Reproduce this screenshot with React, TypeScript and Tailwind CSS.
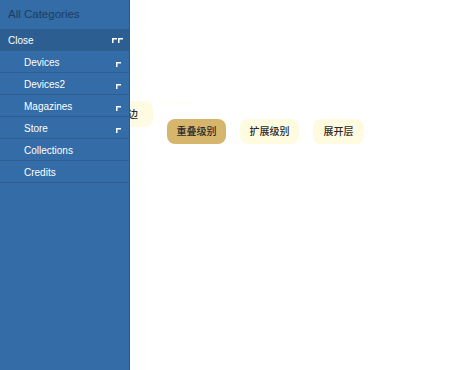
import React from 'react';

const items = [
  { label: 'Devices', sub: true },
  { label: 'Devices2', sub: true },
  { label: 'Magazines', sub: true },
  { label: 'Store', sub: true },
  { label: 'Collections', sub: false },
  { label: 'Credits', sub: false },
];

function Corner() {
  return (
    <svg width="5" height="5" viewBox="0 0 5 5" className="block">
      <path d="M0.75 5 V0.75 H5" fill="none" stroke="#ffffff" strokeWidth="1.5" />
    </svg>
  );
}

export default function App() {
  return (
    <div
      className="relative w-[474px] h-[370px] overflow-hidden bg-white"
      style={{ fontFamily: '"Liberation Sans", Arial, sans-serif' }}
    >
      {/* page content behind the menu */}
      <div
        className="flex flex-col pt-[101px] text-[10px] text-[#2a2a2a] font-medium"
        style={{ fontFamily: '"Liberation Sans", "Noto Sans CJK SC", sans-serif' }}
      >
        <div className="flex items-start gap-[8px] pl-[60px]">
          <div className="w-[93px] h-[26px] rounded-lg bg-[#fffbe3] flex items-center justify-end pr-[15px]">边</div>
          <div className="w-[30px] h-[3px] bg-[#fffef7]" />
        </div>
        <div className="flex items-center gap-[14px] pl-[167px] mt-[-8px]">
          <div className="w-[59px] h-[25px] rounded-lg bg-[#d6b56c] flex items-center justify-center">重叠级别</div>
          <div className="w-[59px] h-[25px] rounded-lg bg-[#fffbe0] flex items-center justify-center">扩展级别</div>
          <div className="w-[51px] h-[25px] rounded-lg bg-[#fffbe0] flex items-center justify-center">展开层</div>
        </div>
      </div>

      {/* off-canvas menu */}
      <div className="absolute inset-y-0 left-0 w-[130px] bg-[#336ca6] border-r border-[#2a5a8a] flex flex-col">
        <div className="h-[29px] flex items-center pl-2 text-[11.5px] text-[#1d3d5e]">All Categories</div>
        <div className="h-[22px] flex items-center justify-between pl-2 pr-[6px] bg-[#2c5e92] border-b border-[#2d5f91] text-[10px] text-white">
          <span className="mt-[1px]">Close</span>
          <span className="flex gap-[1px] mt-[2px]">
            <Corner />
            <Corner />
          </span>
        </div>
        {items.map((it) => (
          <div
            key={it.label}
            className="h-[22px] flex items-center justify-between pl-6 pr-[8px] border-b border-[#2d5f91] text-[10px] text-white"
          >
            <span className="mt-[1px]">{it.label}</span>
            {it.sub && (
              <span className="mt-[6px]">
                <Corner />
              </span>
            )}
          </div>
        ))}
      </div>
    </div>
  );
}
